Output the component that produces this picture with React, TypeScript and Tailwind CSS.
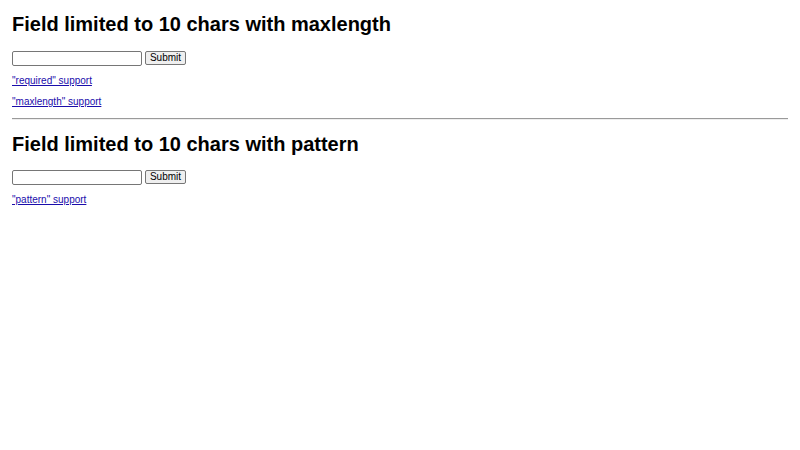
import React from "react";

function FieldForm() {
  return (
    <form className="flex items-center h-[16px]" onSubmit={(e) => e.preventDefault()}>
      <input
        type="text"
        maxLength={10}
        className="w-[130px] h-[15px] border border-[#767676] rounded-[2px] bg-white px-[1px] text-[10px] outline-none"
      />
      <button
        type="submit"
        className="ml-[3px] w-[41px] h-[14px] border border-[#767676] rounded-[2px] bg-[#efefef] text-[10px] leading-none text-black"
      >
        Submit
      </button>
    </form>
  );
}

function SupportLink({ label }: { label: string }) {
  return (
    <p className="mt-[9px] text-[10px] leading-[12px]">
      <a href="#" className="text-[#1a0dab] underline">
        {label}
      </a>
    </p>
  );
}

export default function App() {
  return (
    <div
      className="min-h-[450px] bg-white text-black px-[12px] pt-[13px]"
      style={{ fontFamily: '"Liberation Sans", Arial, sans-serif' }}
    >
      <h1 className="text-[20px] leading-[23px] font-bold mb-[14px]">
        Field limited to 10 chars with maxlength
      </h1>
      <FieldForm />
      <SupportLink label={'"required" support'} />
      <SupportLink label={'"maxlength" support'} />

      <hr className="mt-[10px] border-t border-b border-t-[#9a9a9a] border-b-[#eeeeee]" />

      <h1 className="mt-[13px] text-[20px] leading-[23px] font-bold mb-[13px]">
        Field limited to 10 chars with pattern
      </h1>
      <FieldForm />
      <SupportLink label={'"pattern" support'} />
    </div>
  );
}
